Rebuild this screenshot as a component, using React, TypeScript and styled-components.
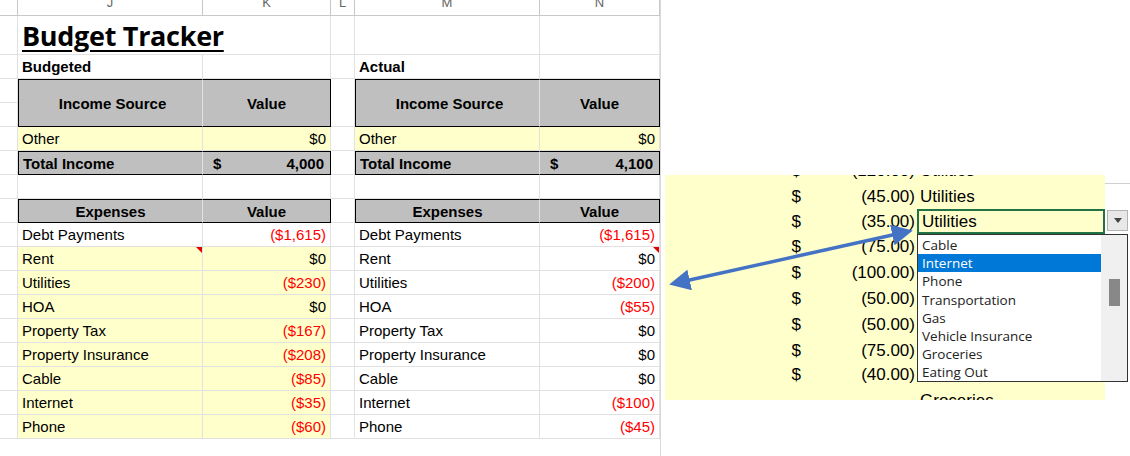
import React from "react";
import styled, { createGlobalStyle, css } from "styled-components";

const Global = createGlobalStyle`
  html, body { margin: 0; padding: 0; background: #fff; }
  body { font-family: "Liberation Sans", Arial, sans-serif; width: 1130px; height: 456px; overflow: hidden; }
`;

const Page = styled.div`
  position: relative;
  display: flex;
  width: 1130px;
  height: 456px;
`;

const Sheet = styled.div`
  display: grid;
  grid-template-columns: 18px 185px 128px 24px 185px 120px;
  grid-template-rows: 16px 39px 24px 24px 24px 24px 24px 24px 24px repeat(9, 24px);
  width: 660px;
  align-content: start;
  border-right: 1px solid #d9d9d9;
`;

type Kind = "plain" | "yellow" | "head" | "total";

const Cell = styled.div<{ $kind?: Kind; $align?: string; $bold?: boolean; $red?: boolean }>`
  box-sizing: border-box;
  display: flex;
  align-items: center;
  justify-content: ${(p) => p.$align || "flex-start"};
  padding: 0 4px;
  font-size: 15px;
  color: ${(p) => (p.$red ? "#ff0000" : "#000")};
  font-weight: ${(p) => (p.$bold ? 700 : 400)};
  border-bottom: 1px solid #e1e1e1;
  border-right: 1px solid #e1e1e1;
  white-space: nowrap;
  position: relative;
  ${(p) => p.$kind === "yellow" && css`background: #ffffcc;`}
  ${(p) =>
    (p.$kind === "head" || p.$kind === "total") &&
    css`
      background: #bfbfbf;
      font-weight: 700;
      border-top: 1.5px solid #000;
      border-bottom: 1.5px solid #000;
    `}
`;

const Comment = styled.span`
  position: absolute;
  top: 0;
  right: 0;
  width: 0;
  height: 0;
  border-top: 6px solid #e00000;
  border-left: 6px solid transparent;
`;

const ColHead = styled.div`
  grid-column: 1 / -1;
  height: 16px;
  box-sizing: border-box;
  display: grid;
  grid-template-columns: 18px 185px 128px 24px 185px 120px;
  border-bottom: 1px solid #c8c8c8;
  overflow: hidden;
`;
const ColLetter = styled.div`
  border-right: 1px solid #c8c8c8;
  color: #666;
  font-size: 13px;
  text-align: center;
  line-height: 6px;
`;

const Title = styled.div`
  grid-column: 2 / 4;
  font-size: 27px;
  font-weight: 700;
  text-decoration: underline;
  text-decoration-thickness: 2px;
  text-underline-offset: 4px;
  padding: 0 4px;
  display: flex;
  align-items: center;
  border-bottom: 1px solid #e1e1e1;
  border-right: 1px solid #e1e1e1;
  font-family: "Open Sans", "Liberation Sans", sans-serif;
  letter-spacing: -0.3px;
`;

const Overlay = styled.div`
  flex: 1;
  position: relative;
`;

const Panel = styled.div`
  position: absolute;
  left: 4px;
  top: 175px;
  width: 440px;
  height: 225px;
  background: #ffffcc;
  overflow: hidden;
  font-size: 17px;
`;

const PRow = styled.div<{ $top: number }>`
  position: absolute;
  top: ${(p) => p.$top}px;
  left: 0;
  width: 440px;
  height: 26px;
  display: grid;
  grid-template-columns: 136px 114px 190px;
  align-items: center;
`;
const Dollar = styled.span`text-align: right;`;
const Amt = styled.span`text-align: right;`;
const Cat = styled.span`padding-left: 5px;`;

const SideLine = styled.div`
  position: absolute;
  left: 444px;
  top: 183px;
  width: 30px;
  border-top: 1px solid #d0d0d0;
`;

const Selected = styled.div`
  position: absolute;
  left: 256px;
  top: 209px;
  width: 188px;
  height: 25px;
  box-sizing: border-box;
  border: 2px solid #217346;
  background: #ffffcc;
  font-size: 17px;
  padding-left: 3px;
  display: flex;
  align-items: center;
`;

const DropBtn = styled.div`
  position: absolute;
  left: 446px;
  top: 210px;
  width: 21px;
  height: 21px;
  box-sizing: border-box;
  background: #e8e8e8;
  border: 1px solid #b4b4b4;
  display: flex;
  align-items: center;
  justify-content: center;
`;

const List = styled.div`
  position: absolute;
  left: 256px;
  top: 234px;
  width: 211px;
  height: 148px;
  box-sizing: border-box;
  border: 1px solid #333;
  background: #fff;
  display: flex;
`;
const Items = styled.div`
  flex: 1;
  padding-top: 1px;
`;
const Item = styled.div<{ $sel?: boolean }>`
  height: 18.2px;
  font-size: 13.5px;
  padding-left: 4px;
  display: flex;
  align-items: center;
  background: ${(p) => (p.$sel ? "#0078d7" : "transparent")};
  color: ${(p) => (p.$sel ? "#fff" : "#222")};
  font-family: "Open Sans", "Liberation Sans", sans-serif;
`;
const Scroll = styled.div`
  width: 26px;
  background: #f0f0f0;
  position: relative;
`;
const Thumb = styled.span`
  position: absolute;
  left: 8px;
  top: 44px;
  width: 11px;
  height: 27px;
  background: #888;
`;

const ArrowSvg = styled.svg`
  position: absolute;
  left: 0;
  top: 0;
  pointer-events: none;
`;

type Row = { l: string; v: string; red?: boolean; kind: Kind; c?: boolean };
const left: Row[] = [
  { l: "Debt Payments", v: "($1,615)", red: true, kind: "plain" },
  { l: "Rent", v: "$0", kind: "yellow", c: true },
  { l: "Utilities", v: "($230)", red: true, kind: "yellow" },
  { l: "HOA", v: "$0", kind: "yellow" },
  { l: "Property Tax", v: "($167)", red: true, kind: "yellow" },
  { l: "Property Insurance", v: "($208)", red: true, kind: "yellow" },
  { l: "Cable", v: "($85)", red: true, kind: "yellow" },
  { l: "Internet", v: "($35)", red: true, kind: "yellow" },
  { l: "Phone", v: "($60)", red: true, kind: "yellow" },
];
const right: Row[] = [
  { l: "Debt Payments", v: "($1,615)", red: true, kind: "plain" },
  { l: "Rent", v: "$0", kind: "plain", c: true },
  { l: "Utilities", v: "($200)", red: true, kind: "plain" },
  { l: "HOA", v: "($55)", red: true, kind: "plain" },
  { l: "Property Tax", v: "$0", kind: "plain" },
  { l: "Property Insurance", v: "$0", kind: "plain" },
  { l: "Cable", v: "$0", kind: "plain" },
  { l: "Internet", v: "($100)", red: true, kind: "plain" },
  { l: "Phone", v: "($45)", red: true, kind: "plain" },
];

const prows = [
  { t: 158, a: "(120.00)", c: "Utilities" },
  { t: 184, a: "(45.00)", c: "Utilities" },
  { t: 209, a: "(35.00)", c: "" },
  { t: 234, a: "(75.00)", c: "" },
  { t: 260, a: "(100.00)", c: "" },
  { t: 286, a: "(50.00)", c: "" },
  { t: 312, a: "(50.00)", c: "" },
  { t: 338, a: "(75.00)", c: "" },
  { t: 362, a: "(40.00)", c: "Entertainment" },
  { t: 388, a: "", c: "Groceries" },
];

const items = ["Cable", "Internet", "Phone", "Transportation", "Gas", "Vehicle Insurance", "Groceries", "Eating Out"];

const Blank = () => <Cell />;

export default function App() {
  return (
    <Page>
      <Global />
      <Sheet>
        <ColHead>
          <ColLetter />
          <ColLetter>J</ColLetter>
          <ColLetter>K</ColLetter>
          <ColLetter>L</ColLetter>
          <ColLetter>M</ColLetter>
          <ColLetter>N</ColLetter>
        </ColHead>
        <Blank />
        <Title>Budget Tracker</Title>
        <Blank /><Blank /><Blank />
        <Blank />
        <Cell $bold>Budgeted</Cell><Cell />
        <Cell />
        <Cell $bold>Actual</Cell><Cell />
        <Blank />
        <Cell $kind="head" $align="center" style={{ gridRow: "span 2", borderLeft: "1.5px solid #000", paddingLeft: 8 }}>Income Source</Cell>
        <Cell $kind="head" $align="center" style={{ gridRow: "span 2", borderRight: "1.5px solid #000" }}>Value</Cell>
        <Cell style={{ gridRow: "span 2" }} />
        <Cell $kind="head" $align="center" style={{ gridRow: "span 2", borderLeft: "1.5px solid #000", paddingLeft: 8 }}>Income Source</Cell>
        <Cell $kind="head" $align="center" style={{ gridRow: "span 2", borderRight: "1.5px solid #000" }}>Value</Cell>
        <Blank />
        <Blank />
        <Cell $kind="yellow">Other</Cell>
        <Cell $kind="yellow" $align="flex-end">$0</Cell>
        <Blank />
        <Cell $kind="yellow">Other</Cell>
        <Cell $kind="yellow" $align="flex-end">$0</Cell>
        <Blank />
        <Cell $kind="total" style={{ borderLeft: "1.5px solid #000" }}>Total Income</Cell>
        <Cell $kind="total" $align="space-between" style={{ borderRight: "1.5px solid #000", padding: "0 6px 0 10px" }}><span>$</span><span>4,000</span></Cell>
        <Blank />
        <Cell $kind="total" style={{ borderLeft: "1.5px solid #000" }}>Total Income</Cell>
        <Cell $kind="total" $align="space-between" style={{ borderRight: "1.5px solid #000", padding: "0 6px 0 10px" }}><span>$</span><span>4,100</span></Cell>
        <Blank /><Blank /><Blank /><Blank /><Blank /><Blank />
        <Blank />
        <Cell $kind="head" $align="center" style={{ borderLeft: "1.5px solid #000" }}>Expenses</Cell>
        <Cell $kind="head" $align="center" style={{ borderRight: "1.5px solid #000" }}>Value</Cell>
        <Blank />
        <Cell $kind="head" $align="center" style={{ borderLeft: "1.5px solid #000" }}>Expenses</Cell>
        <Cell $kind="head" $align="center" style={{ borderRight: "1.5px solid #000" }}>Value</Cell>
        {left.map((r, i) => (
          <React.Fragment key={i}>
            <Blank />
            <Cell $kind={r.kind}>{r.l}{r.c && <Comment />}</Cell>
            <Cell $kind={r.kind} $align="flex-end" $red={r.red}>{r.v}</Cell>
            <Blank />
            <Cell $kind={right[i].kind}>{right[i].l}</Cell>
            <Cell $kind={right[i].kind} $align="flex-end" $red={right[i].red}>{right[i].v}{right[i].c && <Comment />}</Cell>
          </React.Fragment>
        ))}
      </Sheet>
      <Overlay>
        <SideLine />
        <Panel>
          {prows.map((r, i) => (
            <PRow key={i} $top={r.t - 175}>
              <Dollar>{r.a ? "$" : ""}</Dollar>
              <Amt>{r.a}</Amt>
              <Cat>{r.c}</Cat>
            </PRow>
          ))}
        </Panel>
        <Selected>Utilities</Selected>
        <DropBtn>
          <svg width="8" height="5" viewBox="0 0 8 5"><path d="M0 0h8L4 5z" fill="#444" /></svg>
        </DropBtn>
        <List>
          <Items>
            {items.map((t, i) => (
              <Item key={t} $sel={i === 1}>{t}</Item>
            ))}
          </Items>
          <Scroll><Thumb /></Scroll>
        </List>
      </Overlay>
      <ArrowSvg width="1130" height="456">
        <defs>
          <marker id="ah" markerWidth="6" markerHeight="6" refX="4" refY="3" orient="auto-start-reverse" markerUnits="strokeWidth">
            <path d="M0 0L6 3L0 6z" fill="#4472c4" />
          </marker>
        </defs>
        <line x1="676" y1="283" x2="906" y2="232" stroke="#4472c4" strokeWidth="3.5" markerStart="url(#ah)" markerEnd="url(#ah)" />
      </ArrowSvg>
    </Page>
  );
}
